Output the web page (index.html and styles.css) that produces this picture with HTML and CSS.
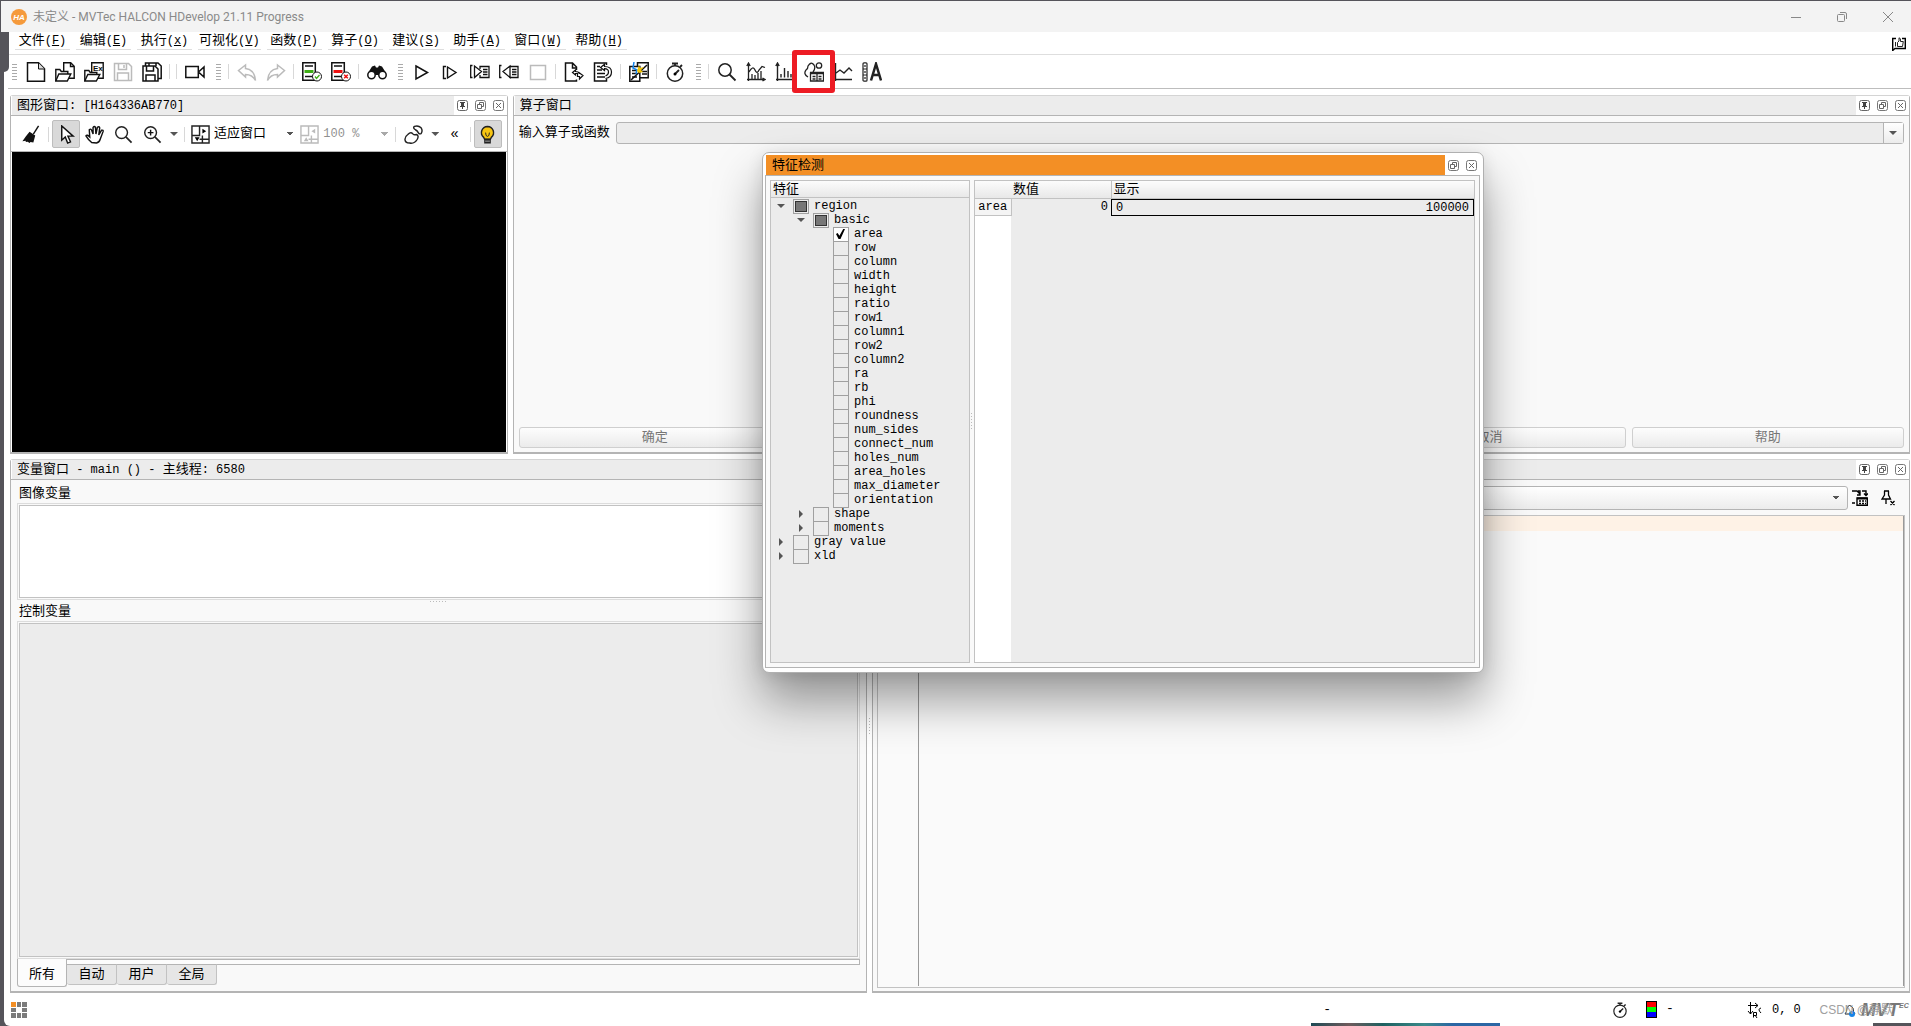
FILE: index.html
```html
<!DOCTYPE html>
<html lang="zh-CN">
<head>
    <meta charset="UTF-8">
    <meta name="viewport" content="width=device-width, initial-scale=1.0">
    <title>未定义 - MVTec HALCON HDevelop 21.11 Progress</title>
    <link rel="stylesheet" href="styles.css">
</head>
<body>
    <!-- shared icons -->
    <svg class="defs" aria-hidden="true">
        <symbol id="i-pin" viewBox="0 0 11 11"><rect x=".5" y=".5" width="10" height="10" rx="2" fill="none" stroke="#666"/><path d="M3 2.5h5M3 6.500h5M5.500 6v3" stroke="#444" fill="none"/><path d="M4 3h3v3H4z" fill="#444"/></symbol>
        <symbol id="i-float" viewBox="0 0 11 11"><rect x=".5" y=".5" width="10" height="10" rx="2" fill="none" stroke="#777"/><path d="M2.500 4.500h4v4h-4zM4.500 4V2.500h4v4H7" stroke="#666" fill="none"/></symbol>
        <symbol id="i-close" viewBox="0 0 11 11"><rect x=".5" y=".5" width="10" height="10" rx="2" fill="none" stroke="#777"/><path d="M3 3l5 5M8 3L3 8" stroke="#666" fill="none"/></symbol>
        <symbol id="i-watch" viewBox="0 0 20 20"><circle cx="10" cy="11.500" r="7.700" fill="none" stroke="#222" stroke-width="1.500"/><path d="M7 1.500h6M10 2v2M15 5l2-2M10 12l4-4" stroke="#222" stroke-width="1.800"/><circle cx="10" cy="12" r="1.500"/></symbol>
        <symbol id="i-search" viewBox="0 0 20 20"><circle cx="8" cy="8" r="6.200" fill="none" stroke="#222" stroke-width="1.500"/><path d="M12.500 12.500l6 6" stroke="#222" stroke-width="1.800"/></symbol>
    </svg>

    <header class="titlebar">
        <svg class="logo" viewBox="0 0 16 16"><circle cx="8" cy="8" r="8" fill="#f59a3c"/><text x="8" y="11" text-anchor="middle">HA</text></svg>
        <h1>未定义 - MVTec HALCON HDevelop 21.11 Progress</h1>
        <div class="win-controls">
            <button aria-label="最小化"><svg viewBox="0 0 10 10"><path d="M0 5.500h10"/></svg></button>
            <button aria-label="还原"><svg viewBox="0 0 10 10"><rect x=".5" y="2.500" width="7" height="7" rx="1"/><path d="M3 .5h5q1.500 0 1.500 1.500v5"/></svg></button>
            <button aria-label="关闭"><svg viewBox="0 0 10 10"><path d="M0 0l10 10M10 0L0 10"/></svg></button>
        </div>
    </header>

    <div class="app">
        <nav class="menubar">
            <button>文件<span class="lat">(<u>F</u>)</span></button>
            <button>编辑<span class="lat">(<u>E</u>)</span></button>
            <button>执行<span class="lat">(<u>x</u>)</span></button>
            <button>可视化<span class="lat">(<u>V</u>)</span></button>
            <button>函数<span class="lat">(<u>P</u>)</span></button>
            <button>算子<span class="lat">(<u>O</u>)</span></button>
            <button>建议<span class="lat">(<u>S</u>)</span></button>
            <button>助手<span class="lat">(<u>A</u>)</span></button>
            <button>窗口<span class="lat">(<u>W</u>)</span></button>
            <button>帮助<span class="lat">(<u>H</u>)</span></button>
            <button class="feedback" aria-label="反馈"><svg viewBox="0 0 14 14"><path d="M4 1.500H.7v12L3 11.500h10.300v-10H10" fill="none" stroke="#000" stroke-width="1.400"/><path d="M3.500 5v4.500M5.500 9.500V5.500L7 4V.8q2 0 1.500 3.700h2.800L10.500 9.500z" fill="none" stroke="#222"/></svg></button>
        </nav>

        <div class="toolbars">
            <div class="toolbar">
                <i class="grip"></i>
                <button aria-label="新建程序"><svg viewBox="0 0 20 20"><path d="M1.500.8h11l6 6v12.500h-17z" fill="none" stroke="#111" stroke-width="1.500"/><path d="M12.500 1v6h6" fill="#ddd" stroke="#111"/></svg></button>
                <button aria-label="打开程序"><svg viewBox="0 0 20 20" fill="#fff" stroke="#111" stroke-width="1.400"><path d="M8.700.8h7l3.500 3.500v12H8.700z"/><path d="M15.500 1v3.500h3.500" fill="none"/><path d="M.8 19V7.500h4l1.500 2h6.500V12"/><path d="M.8 19l3-7h12l-3.500 7z"/></svg></button>
                <button aria-label="浏览例程"><svg viewBox="0 0 20 20" fill="#fff" stroke="#111" stroke-width="1.400"><path d="M7.700.8h11.500v15.500H7.700z"/><path d="M.8 19V8.500h4l1.500 2h6.500V13"/><path d="M.8 19l3-6.500h12l-3.500 6.500z"/><text x="9" y="9" class="ex">Ex</text></svg></button>
                <button aria-label="保存" disabled><svg viewBox="0 0 20 20" fill="none" stroke="#bbb" stroke-width="1.500"><path d="M1.500 1.500h14l3 3v14h-17zM5.500 1.500v6h8v-6M11 3v3M4.500 18v-7h11v7"/></svg></button>
                <button aria-label="全部保存"><svg viewBox="0 0 20 20" fill="none" stroke="#111" stroke-width="1.500"><path d="M1 4h12l3 3v12H1zM4.500 4v5h7V4M4 19v-6h9v6"/><path d="M3.500 4V1h12.500l3.200 3v12.500H16"/><path d="M7 1v3M14 1v3"/></svg></button>
                <i class="sep"></i><i class="sep"></i>
                <button aria-label="图像采集"><svg viewBox="0 0 20 20" fill="none" stroke="#111" stroke-width="1.500"><path d="M.8 4.500h12.500v11H.8zM13.500 10l5.500-5v10z"/></svg></button>
            </div>
            <div class="toolbar">
                <i class="grip"></i><i class="sep"></i>
                <button aria-label="撤销" disabled><svg viewBox="0 0 20 20" fill="none" stroke="#bbb" stroke-width="1.500"><path d="M1.500 8.500l7-5.500v3.500q9 1 10 12-3-6-10-6V15z"/></svg></button>
                <button aria-label="重做" disabled><svg viewBox="0 0 20 20" fill="none" stroke="#bbb" stroke-width="1.500"><path d="M18.500 8.500l-7-5.500v3.500q-9 1-10 12 3-6 10-6V15z"/></svg></button>
                <i class="sep"></i>
                <button aria-label="激活"><svg viewBox="0 0 20 20"><path d="M.8.800h12.500v17.500H.8zM3 4h8M3 14.500h8" fill="none" stroke="#111" stroke-width="1.500"/><path d="M2.500 9.500h9" stroke="#3fae15" stroke-width="3"/><circle cx="15" cy="14.500" r="4.500" fill="#fff" stroke="#111"/><path d="M13 14.500l1.500 2 3-3.500" stroke="#3fae15" stroke-width="1.300" fill="none"/></svg></button>
                <button aria-label="注销"><svg viewBox="0 0 20 20"><path d="M.8.800h12.500v17.500H.8zM3 4h8M3 14.500h8" fill="none" stroke="#111" stroke-width="1.500"/><path d="M2.500 9.500h9" stroke="#e11" stroke-width="3"/><circle cx="15" cy="14.500" r="4.500" fill="#fff" stroke="#111"/><path d="M13.200 12.700l3.600 3.600M16.800 12.700l-3.600 3.600" stroke="#e11" stroke-width="1.500"/></svg></button>
                <i class="sep"></i>
                <button aria-label="查找"><svg viewBox="0 0 20 20"><path d="M1 11L5 4.500l3-1 1 2h2l1-2 3 1 4 6.500-5 2h-8z" fill="#111"/><circle cx="4.500" cy="13" r="3.700" fill="#fff" stroke="#111" stroke-width="1.500"/><circle cx="15.500" cy="13" r="3.700" fill="#fff" stroke="#111" stroke-width="1.500"/></svg></button>
            </div>
            <div class="toolbar">
                <i class="grip"></i>
                <button aria-label="运行"><svg viewBox="0 0 20 20" fill="none" stroke="#111" stroke-width="1.500"><path d="M4 4l11.500 6.500L4 17z"/></svg></button>
                <button aria-label="单步跳过"><svg viewBox="0 0 20 20" fill="none" stroke="#111" stroke-width="1.400"><path d="M5 4.500H2.500v12H5M6.500 5l8.500 5.500L6.500 16z"/></svg></button>
                <button aria-label="单步进入"><svg viewBox="0 0 20 20" fill="none" stroke="#111" stroke-width="1.300"><path d="M2.500 3.500H.7v12h1.800M4.500 4v11.500l7-6zM10 7V4.500h9v11h-9V13M13 7.500h4.500M13 10h4.500M13 12.500h4.500"/></svg></button>
                <button aria-label="单步跳出"><svg viewBox="0 0 20 20" fill="none" stroke="#111" stroke-width="1.300"><path d="M2.500 3.500H.7v12h1.800M11 4v11.500L4 9.500zM11 4.500h8v11h-8M13 7.500h4.500M13 10h4.500M13 12.500h4.500"/></svg></button>
                <button aria-label="停止" disabled><svg viewBox="0 0 20 20" fill="none" stroke="#bbb" stroke-width="1.500"><path d="M2.500 3.500h15v14h-15z"/></svg></button>
                <i class="sep"></i>
                <button aria-label="导出"><svg viewBox="0 0 20 20" fill="none" stroke="#111" stroke-width="1.500"><path d="M12.500 8V5L8.500 1H1.500v18h11v-1.500M8.500 1v5h4"/><path d="M11.500 8L8.500 10.500l3 2.500v-1.500h2v3h2V17l3.500-3.500-3.500-2.500v1q-.5-2.500-4-2.500z" stroke-width="1.200" fill="#fff"/></svg></button>
                <button aria-label="重置"><svg viewBox="0 0 20 20" fill="none" stroke="#111" stroke-width="1.500"><path d="M13.500 3V1h-12v18h12v-2M4 4.500h3M4 8h5M4 11.500h8M4 15h8"/><path d="M12.500 16.500q6-1 6-6.500t-7-5.500V2.200L7.500 5.500l4 3V6.700q4 .3 4 3.300t-3 4" stroke-width="1.200"/></svg></button>
                <i class="sep"></i>
                <button aria-label="比较"><svg viewBox="0 0 20 20" fill="#fff" stroke="#111" stroke-width="1.500"><path d="M8.500.8h10.700v15H8.500z"/><path d="M.8 4.500h10v14.700H.8zM3 8.500h5M3 11.500h5M3 15h5M13 9.500h5M13 12h5"/><path d="M2 18L18 3" /><path d="M5 0l-1 6 4 2-1 4" stroke="#1684e8" fill="none"/><path d="M10 3l1 3 4-1-3 3 2 2-4 1-2-2" fill="#f5c400" stroke="none"/></svg></button>
                <i class="sep"></i>
                <button aria-label="性能分析"><svg><use href="#i-watch"/></svg></button>
            </div>
            <div class="toolbar">
                <i class="grip"></i><i class="sep"></i>
                <button aria-label="放大镜"><svg><use href="#i-search"/></svg></button>
                <button aria-label="灰度直方图"><svg viewBox="0 0 20 20" fill="none" stroke="#222" stroke-width="1.300"><path d="M2.500 1v18M1 17.500h18M.8 4l1.700-3 1.700 3M16.500 16l2.500 1.500-2.500 1.500M3 10q4-7 6-2t4 0l3-3.500 3 1M6 12v5M9 13v4M12 11v6M15 9v8"/></svg></button>
                <button aria-label="直方图"><svg viewBox="0 0 20 20" fill="none" stroke="#222" stroke-width="1.400"><path d="M2.500 1v18M1 17.500h18M.8 4l1.700-3 1.700 3M6 12v3.500M9.500 6v9.500M13 9v6.500M16 12v3.500"/></svg></button>
                <button class="marked" aria-label="特征检测"><svg viewBox="0 0 20 20" fill="none" stroke="#222" stroke-width="1.300"><path d="M4 15Q-1 12 2 8q2-1 2-4 3-5 6-1 2 3-1 7"/><circle cx="15" cy="3.500" r="2.700"/><path d="M6.500 11h13v8h-13z"/><path d="M6 11h14" stroke-width="2.500"/><path d="M13 12v7M8.500 14.500h3M8.500 17h3M14.500 14.500h3M14.500 17h3"/></svg></button>
                <button aria-label="线轮廓"><svg viewBox="0 0 20 20" fill="none" stroke="#222" stroke-width="1.400"><path d="M2.500 1v18M1 17.500h18M3 11l4-3 4 3 5-5 3 3"/></svg></button>
                <button aria-label="OCR"><svg viewBox="0 0 20 20" fill="none" stroke="#222" stroke-width="1.200"><rect x="1" y=".8" width="4" height="18.400" rx="1"/><path d="M1 7h4M1 13h4M3 3v2M3 9v2M3 15v2"/><path d="M9 18.500L14 2l5 16.500M10.500 13h7" stroke-width="2.500"/></svg></button>
            </div>
        </div>

        <main class="workspace">
            <div class="dock-row top">
                <section class="dock graphics">
                    <header>
                        <h2>图形窗口<span class="lat">: [H164336AB770]</span></h2>
                        <div class="dock-buttons">
                            <button aria-label="固定"><svg><use href="#i-pin"/></svg></button>
                            <button aria-label="浮动"><svg><use href="#i-float"/></svg></button>
                            <button aria-label="关闭"><svg><use href="#i-close"/></svg></button>
                        </div>
                    </header>
                    <div class="view-tools">
                        <button aria-label="清空"><svg viewBox="0 0 20 20"><path d="M18.500 1L13 9.500" stroke="#111" stroke-width="1.500"/><path d="M9 7l6 4-2 7.500-3-.5-1 1-2-1.500-2 .5v-1.500l-3.500.5L5 12z" fill="#111"/></svg></button>
                        <i class="sep"></i>
                        <button class="active" aria-label="选择"><svg viewBox="0 0 20 20"><path d="M5 1v15l3.700-3.500 2.500 6.500 3-1.300-2.700-6H17z" fill="#fff" stroke="#111" stroke-width="1.500"/></svg></button>
                        <button aria-label="移动"><svg viewBox="0 0 20 20"><path d="M7 18.500Q3 15 1 11.500q1-2 4 1L4.500 5q1.500-1.500 2.500.5l1.500 4V2.500q1.500-2 2.500 0l.5 7 1.500-7q2-1.500 2.500.5l-1 7.500 3-5q2-.5 1.500 1.500-1.500 4-3 8-1 3.500-4 4z" fill="none" stroke="#111" stroke-width="1.500"/></svg></button>
                        <button aria-label="缩放"><svg><use href="#i-search"/></svg></button>
                        <button aria-label="放大"><svg viewBox="0 0 20 20"><use href="#i-search"/><path d="M5 8h6M8 5v6" stroke="#111" stroke-width="1.500"/></svg></button>
                        <i class="caret"></i>
                        <i class="sep"></i>
                        <label class="pick"><svg viewBox="0 0 20 20"><path d="M1 1h18v18H1zM1 11h8V1M9 15h10M12 11v8" fill="none" stroke="#222" stroke-width="1.500"/><path d="M12 4l4 2.500-4 2.500zM4 13h5l-2.500 4z"/></svg><select aria-label="窗口大小"><option>适应窗口</option></select></label>
                        <label class="pick off"><svg viewBox="0 0 20 20"><path d="M1 1h18v18H1zM1 11h8V1M9 15h10M12 11v8" fill="none" stroke="#bbb" stroke-width="1.500"/><path d="M16 4l-4 2.500 4 2.500zM4 17h5l-2.500-4z" fill="#bbb"/></svg><select class="lat" aria-label="图像大小" disabled><option>100 %</option></select></label>
                        <i class="sep"></i>
                        <button aria-label="绘制区域"><svg viewBox="0 0 20 20" fill="none" stroke="#222" stroke-width="1.500"><path d="M4 10q3-3 5-1 1 2 4 1 3 1 1 5-3 5-8 4-5 0-5-4 0-3 3-5zM11 1.500q4-1.500 7 1.500 2 3 0 6-2 1-3-1-1-2-3-3-3-2-1-3.500z"/></svg></button>
                        <i class="caret"></i>
                        <span class="more">«</span>
                        <i class="sep"></i>
                        <button class="active" aria-label="提示"><svg viewBox="0 0 20 20"><path d="M10 1.500a6.500 6.500 0 0 1 4 11.500l-1 2H7l-1-2A6.500 6.500 0 0 1 10 1.500z" fill="#f7c512" stroke="#222" stroke-width="1.500"/><path d="M8 8q0 4 2 4t2-4" fill="none" stroke="#222"/><path d="M6.500 14.500h7v5h-7z" fill="#222"/><path d="M7.500 17h5" stroke="#aaa"/></svg></button>
                    </div>
                    <div class="canvas"></div>
                </section>

                <section class="dock operator">
                    <header>
                        <h2>算子窗口</h2>
                        <div class="dock-buttons">
                            <button aria-label="固定"><svg><use href="#i-pin"/></svg></button>
                            <button aria-label="浮动"><svg><use href="#i-float"/></svg></button>
                            <button aria-label="关闭"><svg><use href="#i-close"/></svg></button>
                        </div>
                    </header>
                    <div class="operator-search">
                        <label for="operator-name">输入算子或函数</label>
                        <div class="combo">
                            <input id="operator-name" type="text">
                            <button aria-label="展开"><i class="caret"></i></button>
                        </div>
                    </div>
                    <div class="operator-actions">
                        <button disabled>确定</button>
                        <button class="cancel" disabled>取消</button>
                        <button disabled>帮助</button>
                    </div>
                </section>
            </div>

            <div class="dock-row bottom">
                <section class="dock variables">
                    <header>
                        <h2>变量窗口<span class="lat"> - main () - </span>主线程<span class="lat">: 6580</span></h2>
                    </header>
                    <div class="variables-body">
                        <h3>图像变量</h3>
                        <div class="frame image-vars"><div></div></div>
                        <i class="splitter-h"></i>
                        <h3>控制变量</h3>
                        <div class="frame control-vars"><div></div></div>
                        <div class="tab-base"></div>
                        <div class="tabs" role="tablist">
                            <button role="tab" class="current" aria-selected="true">所有</button>
                            <button role="tab">自动</button>
                            <button role="tab">用户</button>
                            <button role="tab">全局</button>
                        </div>
                    </div>
                </section>

                <i class="splitter-v"></i>

                <section class="dock program">
                    <header>
                        <h2></h2>
                        <div class="dock-buttons">
                            <button aria-label="固定"><svg><use href="#i-pin"/></svg></button>
                            <button aria-label="浮动"><svg><use href="#i-float"/></svg></button>
                            <button aria-label="关闭"><svg><use href="#i-close"/></svg></button>
                        </div>
                    </header>
                    <div class="program-bar">
                        <select aria-label="函数"></select>
                        <button aria-label="编辑接口"><svg viewBox="0 0 16 16" fill="none" stroke="#000" stroke-width="1.400"><path d="M0 1h5l3 3M6 1h2v4H5M10 1h4v4M12 3.500l2 2 2-2M0 13h3"/><path d="M5 8h10.300v7.300H5z"/><path d="M5 8.500h10" stroke-width="2"/><path d="M7 11h7M7 13.500h7" stroke-dasharray="2 1"/></svg></button>
                        <button aria-label="取消固定"><svg viewBox="0 0 16 16" fill="none" stroke="#000" stroke-width="1.300"><path d="M4 1h5M4.500 1v4L2 9h8.500L8.500 5V1M6 9v5M10.500 11l4 4M14.500 11l-4 4"/></svg></button>
                    </div>
                    <div class="editor">
                        <div class="gutter"></div>
                        <div class="code"><div class="current-line"></div></div>
                    </div>
                </section>
            </div>
        </main>

        <footer class="statusbar">
            <svg class="state" viewBox="0 0 16 16"><path d="M0 0h5v5H0z" fill="#f38f25"/><path d="M6 0h4v5H6zM11 0h5v5h-5zM0 6h5v4H0zM11 6h5v4h-5zM0 11h5v5H0zM6 11h4v5H6zM11 11h5v5h-5z" fill="#7b7b7b"/></svg>
            <span class="message">-</span>
            <svg class="watch"><use href="#i-watch"/></svg>
            <span class="channels"><i class="rgb"></i>-</span>
            <span class="coords"><svg viewBox="0 0 16 16" fill="none" stroke="#000"><path d="M1 3.500h10M8 1l3 2.500L8 6M3.500 0v12M1 9l2.500 3L6 9M14 6q-4 1 0 5M6.500 15.500v-5h3v3h-3M8 13l2 3"/></svg>0, 0</span>
            <svg class="bell" viewBox="0 0 16 16"><path d="M2 12q2-2 2-6 2-5 6 0 0 4 2 6z" fill="none" stroke="#222"/><circle cx="9" cy="12" r="3" fill="#1684e8"/></svg>
            <span class="brand">MVT<sup>EC</sup></span>
            <span class="watermark">CSDN @静默</span>
        </footer>
    </div>

    <div class="taskbar-peek"></div>
    <div class="desktop-corner"></div>

    <div class="dialog" role="dialog" aria-labelledby="dialog-title">
        <header>
            <h2 id="dialog-title">特征检测</h2>
            <div class="dock-buttons">
                <button aria-label="浮动"><svg><use href="#i-float"/></svg></button>
                <button aria-label="关闭"><svg><use href="#i-close"/></svg></button>
            </div>
        </header>
        <div class="dialog-body">
            <div class="features">
                <div class="head">特征</div>
                <ul class="tree">
                    <li>
                        <i class="arrow open"></i><label><input type="checkbox" class="partial">region</label>
                        <ul>
                            <li>
                                <i class="arrow open"></i><label><input type="checkbox" class="partial">basic</label>
                                <ul>
                                    <li><i class="arrow none"></i><label><input type="checkbox" checked>area</label></li>
                                    <li><i class="arrow none"></i><label><input type="checkbox">row</label></li>
                                    <li><i class="arrow none"></i><label><input type="checkbox">column</label></li>
                                    <li><i class="arrow none"></i><label><input type="checkbox">width</label></li>
                                    <li><i class="arrow none"></i><label><input type="checkbox">height</label></li>
                                    <li><i class="arrow none"></i><label><input type="checkbox">ratio</label></li>
                                    <li><i class="arrow none"></i><label><input type="checkbox">row1</label></li>
                                    <li><i class="arrow none"></i><label><input type="checkbox">column1</label></li>
                                    <li><i class="arrow none"></i><label><input type="checkbox">row2</label></li>
                                    <li><i class="arrow none"></i><label><input type="checkbox">column2</label></li>
                                    <li><i class="arrow none"></i><label><input type="checkbox">ra</label></li>
                                    <li><i class="arrow none"></i><label><input type="checkbox">rb</label></li>
                                    <li><i class="arrow none"></i><label><input type="checkbox">phi</label></li>
                                    <li><i class="arrow none"></i><label><input type="checkbox">roundness</label></li>
                                    <li><i class="arrow none"></i><label><input type="checkbox">num_sides</label></li>
                                    <li><i class="arrow none"></i><label><input type="checkbox">connect_num</label></li>
                                    <li><i class="arrow none"></i><label><input type="checkbox">holes_num</label></li>
                                    <li><i class="arrow none"></i><label><input type="checkbox">area_holes</label></li>
                                    <li><i class="arrow none"></i><label><input type="checkbox">max_diameter</label></li>
                                    <li><i class="arrow none"></i><label><input type="checkbox">orientation</label></li>
                                </ul>
                            </li>
                            <li><i class="arrow"></i><label><input type="checkbox">shape</label></li>
                            <li><i class="arrow"></i><label><input type="checkbox">moments</label></li>
                        </ul>
                    </li>
                    <li><i class="arrow"></i><label><input type="checkbox">gray value</label></li>
                    <li><i class="arrow"></i><label><input type="checkbox">xld</label></li>
                </ul>
            </div>
            <i class="splitter-v"></i>
            <div class="values">
                <table>
                    <thead>
                        <tr><th class="corner"></th><th class="value">数值</th><th>显示</th></tr>
                    </thead>
                    <tbody>
                        <tr>
                            <th scope="row">area</th>
                            <td class="value">0</td>
                            <td class="range"><div><span>0</span><span>100000</span></div></td>
                        </tr>
                    </tbody>
                </table>
            </div>
        </div>
    </div>
</body>
</html>
```
FILE: styles.css
```css
* {
    margin: 0;
    padding: 0;
    box-sizing: border-box;
}

body {
    position: relative;
    display: flex;
    flex-direction: column;
    min-height: 100vh;
    padding: 1px 0 0 1px;
    background: #55545a;
    color: #000;
    font: 13px/16px "Liberation Mono", "Noto Sans CJK SC", monospace;
    overflow: hidden;
}

button,
input,
select {
    font: inherit;
    color: inherit;
    border: none;
    background: none;
}

h1,
h2,
h3,
th {
    font: inherit;
}

svg {
    display: block;
}

.defs {
    position: absolute;
    width: 0;
    height: 0;
}

.lat {
    font-size: 12px;
    white-space: pre;
}

/* Title bar */
.titlebar {
    display: flex;
    align-items: center;
    height: 31px;
    padding-left: 10px;
    background: #f3f3f3;
    color: #8a8a8a;
}

.titlebar h1 {
    flex: 1;
    margin: 1px 0 0 6px;
    font: 12px/16px Roboto, "Noto Sans CJK SC", sans-serif;
}

.logo {
    width: 16px;
    height: 16px;
}

.logo text {
    font: italic bold 8px "Liberation Sans", sans-serif;
    fill: #fff;
}

.win-controls {
    display: flex;
}

.win-controls button {
    width: 46px;
    height: 31px;
    padding: 10px 18px;
}

.win-controls svg {
    width: 10px;
    height: 10px;
    fill: none;
    stroke: #888;
}

/* Application window */
.app {
    position: relative;
    flex: 1;
    display: flex;
    flex-direction: column;
    margin-left: 3px;
    background: #fff;
    border-radius: 0 0 0 6px;
}

.app::before {
    content: '';
    position: absolute;
    top: 0;
    left: 0;
    width: 5px;
    height: 40px;
    background: #55545a;
    border-radius: 0 0 5px 0;
}

.menubar {
    display: flex;
    gap: 6px;
    height: 23px;
    margin-left: 5px;
    padding: 0 5px 0 6px;
    border-bottom: 1px solid #dedede;
}

.menubar button {
    min-width: 55px;
    height: 18px;
    padding: 1px 1px 0;
    border-bottom: 1px solid #dedede;
    white-space: nowrap;
}

.menubar .feedback {
    min-width: 0;
    height: 19px;
    margin-left: auto;
    padding: 4px 0 0;
    border: none;
}

.feedback svg {
    width: 14px;
    height: 14px;
}

.toolbars {
    display: flex;
    gap: 3px;
    height: 34px;
    margin-left: 4px;
    border-bottom: 1px solid #bdbdbd;
}

.toolbar {
    display: flex;
    align-items: center;
}

.toolbar button {
    width: 29px;
    height: 29px;
}

.toolbar svg {
    width: 20px;
    height: 20px;
    margin: 0 auto;
}

.ex {
    font: bold 8px "Liberation Sans", sans-serif;
    fill: #111;
    stroke: none;
}

.grip {
    width: 5px;
    height: 17px;
    margin: 0 4px;
    background: radial-gradient(circle, #aaa 0 1px, transparent 1px) 0 0 / 2px 3px;
}

.sep {
    flex: none;
    width: 1px;
    height: 15px;
    margin: 0 3px;
    background: #d8d8d8;
}

.marked {
    position: relative;
}

.marked::after {
    content: '';
    position: absolute;
    inset: -7px;
    z-index: 1;
    border: 5px solid #ed1c24;
    border-radius: 3px;
}

.caret {
    flex: none;
    width: 8px;
    height: 4px;
    background: #555;
    clip-path: polygon(0 0, 100% 0, 50% 100%);
}

/* Docked windows */
.workspace {
    flex: 1;
    display: grid;
    grid-template-rows: 359fr 534fr;
    gap: 5px;
    padding: 6px 1px 0 6px;
}

.dock-row {
    display: grid;
    min-height: 0;
}

.dock-row.top {
    grid-template-columns: 498fr 1398fr;
    gap: 5px;
}

.dock-row.bottom {
    grid-template-columns: 857fr 5px 1038fr;
}

.dock {
    display: flex;
    flex-direction: column;
    min-width: 0;
    min-height: 0;
    border: 1px solid #b4b4b4;
    border-top-color: #d4d4d4;
    border-bottom-width: 2px;
    border-radius: 3px 3px 0 0;
    background: #f9f9f9;
}

.dock header {
    display: flex;
    flex: none;
    height: 20px;
    border-bottom: 1px solid #b4b4b4;
    background: #fff;
}

.dock h2 {
    flex: 1;
    margin-left: 1px;
    padding: 2px 5px 0;
    background: #ececec;
    white-space: nowrap;
}

.dock-buttons {
    display: flex;
    align-items: center;
    gap: 7px;
    padding: 0 3px;
}

.dock-buttons svg {
    width: 11px;
    height: 11px;
}

.graphics {
    background: #fff;
}

.view-tools {
    display: flex;
    align-items: center;
    flex: none;
    height: 36px;
    padding: 1px 5px 0;
    border-bottom: 1px solid #b4b4b4;
}

.view-tools button {
    flex: none;
    width: 29px;
    height: 28px;
}

.view-tools svg {
    flex: none;
    width: 19px;
    height: 19px;
    margin: 0 auto;
}

.view-tools .active {
    width: 28px;
    border: 1px solid #bdbdbd;
    border-radius: 2px;
    background: #d9d9d9;
}

.view-tools > .caret {
    margin: 0 3px;
}

.pick {
    display: flex;
    align-items: center;
    flex: 108;
    min-width: 0;
    padding: 0 3px;
}

.pick.off {
    flex: 93;
}

.view-tools .pick svg {
    margin: 0;
}

.pick select {
    flex: 1;
    min-width: 0;
    padding-left: 4px;
    appearance: none;
    background: linear-gradient(to bottom left, #555 50%, transparent 50%) right 4px center / 4px 4px no-repeat,
        linear-gradient(to bottom right, #555 50%, transparent 50%) right 0 center / 4px 4px no-repeat;
}

.pick.off select {
    opacity: 0.5;
    color: #222;
}

.view-tools .more {
    margin: 0 8px;
    font-size: 14px;
}

.canvas {
    flex: 1;
    margin: 0 1px;
    background: #000;
}

.operator-search {
    display: flex;
    gap: 6px;
    padding: 6px 5px 0;
}

.operator-search label {
    padding-top: 3px;
}

.combo {
    flex: 1;
    display: flex;
    height: 22px;
    border: 1px solid #b4b4b4;
    border-radius: 3px;
    background: #ececec;
}

.combo input {
    flex: 1;
    min-width: 0;
    outline: none;
}

.combo button {
    width: 20px;
    padding-left: 5px;
    border-left: 1px solid #b4b4b4;
    background: linear-gradient(#fff, #ececec);
}

.combo .caret {
    display: block;
}

.operator-actions {
    display: grid;
    grid-template-columns: repeat(5, 1fr);
    gap: 6px;
    margin-top: auto;
    padding: 0 5px 4px;
}

.operator-actions button {
    height: 21px;
    border: 1px solid #cfcfcf;
    border-radius: 3px;
    background: linear-gradient(#fdfdfd, #ebebeb);
    color: #777;
}

.operator-actions .cancel {
    grid-column: 4;
}

/* Variable window */
.variables-body {
    flex: 1;
    display: flex;
    flex-direction: column;
    min-height: 0;
    padding: 5px 6px 4px;
}

.variables-body h3 {
    height: 18px;
    padding: 1px 2px 0;
}

.frame {
    padding: 1px;
    border: 1px solid #dcdcdc;
    display: flex;
}

.frame div {
    flex: 1;
    border: 1px solid #c2c2c2;
}

.image-vars {
    flex: 95;
}

.image-vars div {
    background: #fff;
}

.control-vars {
    flex: 341;
}

.control-vars div {
    background: #ececec;
}

.splitter-h {
    flex: none;
    align-self: center;
    width: 17px;
    height: 1px;
    margin: 1px 0;
    background: repeating-linear-gradient(90deg, #bbb 0 1px, transparent 1px 3px);
}

.splitter-v {
    align-self: center;
    justify-self: center;
    width: 1px;
    height: 17px;
    background: repeating-linear-gradient(#bbb 0 1px, transparent 1px 3px);
}

.tab-base {
    flex: none;
    height: 6px;
    border: 1px solid #b4b4b4;
    background: #fcfcfc;
}

.tabs {
    display: flex;
    align-items: flex-start;
    margin-top: -1px;
}

.tabs button {
    width: 50px;
    height: 21px;
    border: 1px solid #c2c2c2;
    border-left: none;
    border-top-color: #b4b4b4;
    border-radius: 0 0 3px 3px;
    background: #e6e6e6;
}

.tabs .current {
    height: 28px;
    margin-top: -5px;
    padding-top: 4px;
    border: 1px solid #b4b4b4;
    border-top: none;
    background: #fcfcfc;
}

/* Program window */
.program-bar {
    display: flex;
    align-items: center;
    gap: 4px;
    padding: 6px 13px 5px 4px;
}

.program-bar select {
    flex: 1;
    min-width: 0;
    height: 24px;
    border: 1px solid #b4b4b4;
    border-radius: 3px;
    appearance: none;
    background: linear-gradient(to bottom left, #555 50%, transparent 50%) right 11px center / 4px 4px no-repeat,
        linear-gradient(to bottom right, #555 50%, transparent 50%) right 7px center / 4px 4px no-repeat,
        linear-gradient(#fff, #ececec);
}

.program-bar button + button {
    margin-left: 8px;
}

.program-bar svg {
    width: 16px;
    height: 16px;
}

.editor {
    flex: 1;
    display: flex;
    margin: 0 4px 3px;
    padding-bottom: 1px;
    border: 1px solid #c2c2c2;
    background: #fafafa;
}

.gutter {
    width: 41px;
    border-right: 1px solid #999;
}

.code {
    flex: 1;
    border-right: 1px solid #999;
}

.current-line {
    height: 15px;
    background: #fef2e6;
}

/* Status bar */
.statusbar {
    position: relative;
    display: flex;
    align-items: center;
    height: 33px;
    padding-left: 7px;
}

.statusbar svg {
    flex: none;
    width: 16px;
    height: 16px;
}

.message {
    flex: 1;
    text-align: right;
}

.statusbar .watch {
    margin-left: 281px;
}

.channels {
    display: flex;
    flex: none;
    gap: 9px;
    margin-left: 18px;
    width: 101px;
}

.rgb {
    width: 11px;
    height: 17px;
    border: 1px solid #000;
    background: linear-gradient(#f00 0 5px, #0f0 5px 10px, #00f 10px);
}

.coords {
    display: flex;
    flex: none;
    gap: 9px;
    width: 96px;
    font-size: 12px;
}

.brand {
    flex: none;
    width: 52px;
    padding-left: 2px;
    font: italic bold 18px/20px "Liberation Sans", sans-serif;
    color: #777;
    white-space: nowrap;
}

.brand sup {
    font-size: 7px;
    line-height: 8px;
    vertical-align: 8px;
}

.watermark {
    position: absolute;
    right: 18px;
    bottom: 7px;
    font: 12px/18px "Liberation Sans", "Noto Sans CJK SC", sans-serif;
    color: #a0a0a0;
}

/* Edge of the desktop taskbar showing under the window */
.taskbar-peek {
    position: absolute;
    left: 1311px;
    bottom: 0;
    width: 189px;
    height: 3px;
    background: linear-gradient(90deg, #1d4a55, #6f5a5c 20%, #1d6060 38%, #3a8a8a 60%, #2b66a4 75%, #2b66a4);
}

.desktop-corner {
    position: absolute;
    right: 0;
    bottom: 0;
    width: 38px;
    height: 3px;
    background: #55545a;
}

/* Feature inspection dialog */
.dialog {
    position: absolute;
    top: 152px;
    left: 762px;
    display: flex;
    flex-direction: column;
    width: 722px;
    height: 521px;
    padding: 2px 3px 4px 2px;
    border: 1px solid #b0b0b0;
    border-radius: 7px;
    background: #fff;
    box-shadow: 0 28px 48px rgba(0, 0, 0, 0.38), 0 2px 16px rgba(0, 0, 0, 0.1);
}

.dialog header {
    display: flex;
    height: 20px;
}

.dialog h2 {
    flex: 1;
    margin-left: 1px;
    padding: 3px 6px 0;
    background: #f38f25;
}

.dialog-body {
    flex: 1;
    display: flex;
    padding: 4px;
    border: 1px solid #b4b4b4;
    background: #f9f9f9;
}

.features,
.values {
    border: 1px solid #c2c2c2;
    background: #ececec;
}

.features {
    width: 200px;
}

.dialog .splitter-v {
    margin: 0 2px 0 1px;
}

.head,
thead th {
    height: 17px;
    padding: 1px 2px 0;
    border-bottom: 1px solid #c2c2c2;
    background: linear-gradient(#fcfcfc, #e8e8e8);
    line-height: 15px;
    text-align: left;
}

.tree {
    padding-top: 1px;
    font-size: 12px;
    line-height: 15px;
}

.tree ul {
    padding-left: 20px;
}

.tree ul,
.tree li {
    list-style: none;
}

.tree li {
    min-height: 14px;
    line-height: 14px;
}

.tree label {
    display: inline-flex;
    gap: 5px;
    height: 14px;
    line-height: 15px;
    vertical-align: top;
}

.tree input {
    width: 16px;
    height: 15px;
    appearance: none;
    border: 1px solid #a0a0a0;
    background: #ececec;
}

.tree .partial {
    background: #777;
    border: 1px solid #a0a0a0;
    box-shadow: inset 0 0 0 1px #ececec, inset 0 0 0 2px #333;
}

.tree input:checked {
    background: #fff;
}

.tree input:checked::before {
    content: '';
    display: block;
    width: 9px;
    height: 10px;
    margin: 1px 2px;
    background: #000;
    clip-path: polygon(0 50%, 18% 40%, 38% 68%, 80% 0, 100% 0, 50% 100%, 28% 100%);
}

.arrow {
    display: inline-block;
    width: 4px;
    height: 8px;
    margin: 3px 10px 3px 8px;
    background: #555;
    clip-path: polygon(0 0, 100% 50%, 0 100%);
    vertical-align: top;
}

.arrow.open {
    width: 8px;
    height: 4px;
    margin: 5px 8px 5px 6px;
    clip-path: polygon(0 0, 100% 0, 50% 100%);
}

.arrow.none {
    visibility: hidden;
}

.values {
    flex: 1;
    background: linear-gradient(90deg, #fff 36px, #ececec 36px);
}

table {
    width: 100%;
    border-collapse: collapse;
    table-layout: fixed;
}

.corner {
    width: 36px;
}

thead .value {
    width: 100px;
    border-right: 1px solid #c2c2c2;
}

tbody th {
    height: 17px;
    border: 1px solid #c2c2c2;
    border-top: none;
    border-left: none;
    background: #f4f4f4;
    font-size: 12px;
}

td {
    font-size: 12px;
}

td.value {
    padding-right: 3px;
    text-align: right;
}

.range div {
    display: flex;
    justify-content: space-between;
    height: 17px;
    padding: 0 4px;
    border: 1px solid #000;
}
```
